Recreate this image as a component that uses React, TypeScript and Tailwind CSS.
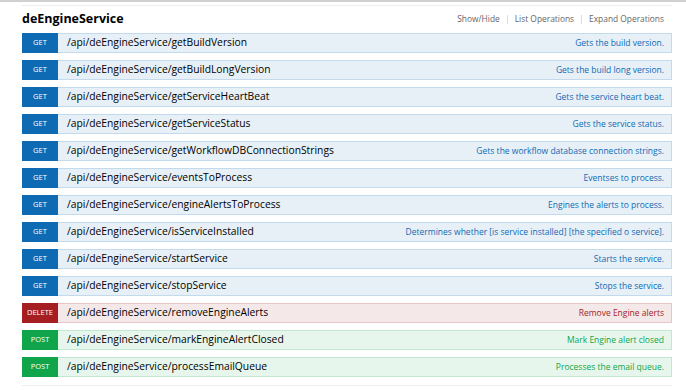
const ops = [
  { method: "GET", path: "/api/deEngineService/getBuildVersion", desc: "Gets the build version." },
  { method: "GET", path: "/api/deEngineService/getBuildLongVersion", desc: "Gets the build long version." },
  { method: "GET", path: "/api/deEngineService/getServiceHeartBeat", desc: "Gets the service heart beat." },
  { method: "GET", path: "/api/deEngineService/getServiceStatus", desc: "Gets the service status." },
  { method: "GET", path: "/api/deEngineService/getWorkflowDBConnectionStrings", desc: "Gets the workflow database connection strings." },
  { method: "GET", path: "/api/deEngineService/eventsToProcess", desc: "Eventses to process." },
  { method: "GET", path: "/api/deEngineService/engineAlertsToProcess", desc: "Engines the alerts to process." },
  { method: "GET", path: "/api/deEngineService/isServiceInstalled", desc: "Determines whether [is service installed] [the specified o service]." },
  { method: "GET", path: "/api/deEngineService/startService", desc: "Starts the service." },
  { method: "GET", path: "/api/deEngineService/stopService", desc: "Stops the service." },
  { method: "DELETE", path: "/api/deEngineService/removeEngineAlerts", desc: "Remove Engine alerts" },
  { method: "POST", path: "/api/deEngineService/markEngineAlertClosed", desc: "Mark Engine alert closed" },
  { method: "POST", path: "/api/deEngineService/processEmailQueue", desc: "Processes the email queue." },
];

const styles: Record<string, { row: string; badge: string; desc: string }> = {
  GET: { row: "bg-[#e7f0f7] border-[#c3d9ec]", badge: "bg-[#0f6ab4]", desc: "text-[#0f6ab4]" },
  DELETE: { row: "bg-[#f5e8e8] border-[#e8c6c7]", badge: "bg-[#a41e22]", desc: "text-[#a41e22]" },
  POST: { row: "bg-[#e7f6ec] border-[#c3e8d1]", badge: "bg-[#10a54a]", desc: "text-[#10a54a]" },
};

export default function App() {
  return (
    <div className="w-[686px] h-[390px] bg-white overflow-hidden" style={{ fontFamily: '"Open Sans", "Noto Sans", sans-serif' }}>
      <div className="h-[2px] bg-[#d0d0d0]" />
      <div className="ml-[22px] mr-[14px] mt-[3px] border-t border-[#eeeeee]">
        <div className="flex items-center justify-between h-[27px] pr-[8px]">
          <h2 className="text-[12.5px] font-bold text-black leading-none">deEngineService</h2>
          <div className="flex items-center text-[8.4px] text-[#666666] leading-none">
            <span className="pr-[7px]">Show/Hide</span>
            <span className="px-[7px] border-l border-[#dddddd]">List Operations</span>
            <span className="pl-[7px] border-l border-[#dddddd]">Expand Operations</span>
          </div>
        </div>
        <div className="flex flex-col gap-[7px]">
          {ops.map((op) => {
            const s = styles[op.method];
            return (
              <div key={op.path} className={`flex items-center h-[20px] border ${s.row}`}>
                <div className={`-ml-px h-[20px] -my-px w-[36px] shrink-0 flex items-center justify-center text-white text-[7.5px] ${s.badge}`}>
                  {op.method}
                </div>
                <span className="ml-[9px] text-[10.3px] text-black">{op.path}</span>
                <span className={`ml-auto pr-[7px] text-[8.5px] ${s.desc}`}>{op.desc}</span>
              </div>
            );
          })}
        </div>
        <div className="mt-[8px] border-t border-[#eeeeee]" />
      </div>
    </div>
  );
}
